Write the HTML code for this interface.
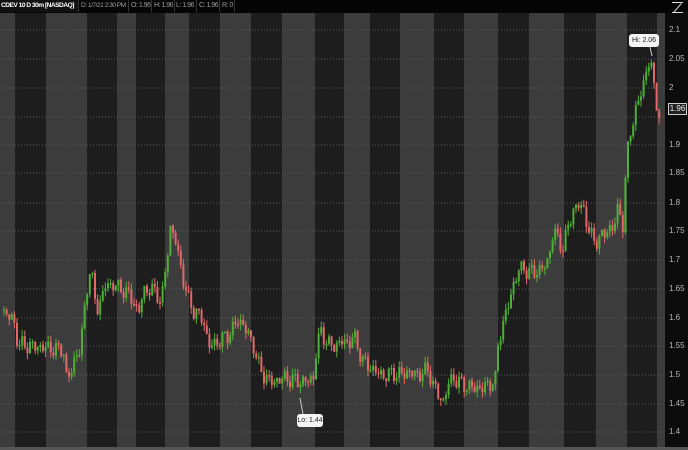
<!DOCTYPE html>
<html><head><meta charset="utf-8"><style>
*{margin:0;padding:0;box-sizing:border-box}
body{width:688px;height:450px;background:#0c0c0c;overflow:hidden;position:relative;font-family:"Liberation Sans",sans-serif}
#hdr{position:absolute;left:0;top:0;width:688px;height:13px;background:#050505;font-size:7px;color:#9a9a9a;line-height:12px}
#hdr span{position:absolute;top:0;padding:0 1px;border-right:1px solid #333;white-space:nowrap;overflow:hidden;letter-spacing:-0.5px;height:12px}
.ax{position:absolute;left:669px;font-size:8px;color:#b8b8b8}
.lbl{position:absolute;background:#f4f4f4;border-radius:3px;color:#222;font-size:7px;line-height:13px;text-align:center;white-space:nowrap;height:13px}
</style></head><body>
<svg id="c" width="688" height="450" style="position:absolute;left:0;top:0"></svg>
<div id="hdr">
<span style="left:0;width:79px;color:#fff;font-weight:bold;background:#111;font-size:6.6px">CDEV 10 D 30m [NASDAQ]</span>
<span style="left:80px;width:49px;font-size:6.6px">D: 1/7/21 2:30 PM</span>
<span style="left:130px;width:22px">O: 1.96</span>
<span style="left:153px;width:22px">H: 1.96</span>
<span style="left:175px;width:22px">L: 1.96</span>
<span style="left:198px;width:22px">C: 1.96</span>
<span style="left:221px;width:14px">R: 0</span>
</div>
<div style="position:absolute;left:672px;top:2px;width:11px;height:11px;border-bottom:1px solid #ddd;border-top:1px solid #ddd"><div style="position:absolute;left:5px;top:-1px;width:1px;height:12px;background:#ddd;transform:rotate(40deg)"></div></div>
<div class="ax" style="top:25px">2.1</div>
<div class="ax" style="top:54px">2.05</div>
<div class="ax" style="top:83px">2</div>
<div class="ax" style="top:140px">1.9</div>
<div class="ax" style="top:168px">1.85</div>
<div class="ax" style="top:198px">1.8</div>
<div class="ax" style="top:226px">1.75</div>
<div class="ax" style="top:255px">1.7</div>
<div class="ax" style="top:284px">1.65</div>
<div class="ax" style="top:313px">1.6</div>
<div class="ax" style="top:341px">1.55</div>
<div class="ax" style="top:370px">1.5</div>
<div class="ax" style="top:399px">1.45</div>
<div class="ax" style="top:427px">1.4</div>
<div style="position:absolute;left:668px;top:103px;width:19px;height:12px;border:1px solid #ccc;background:#222;color:#eee;font-size:8px;line-height:10px;text-align:center">1.96</div>
<div class="lbl" style="left:629px;top:34px;width:30px">Hi: 2.06</div>
<div class="lbl" style="left:297px;top:414px;width:26px">Lo: 1.44</div>
<script>
(function(){
var s=document.getElementById('c'),h='';
var st=[[0,2,'L'],[2,15,'L'],[15,46,'D'],[46,87,'L'],[87,117,'D'],[117,136,'L'],[136,165,'D'],[165,189,'L'],[189,220,'D'],[220,251,'L'],[251,282,'D'],[282,315,'L'],[315,344,'D'],[344,370,'L'],[370,400,'D'],[400,434,'L'],[434,464,'D'],[464,498,'L'],[498,529,'D'],[529,564,'L'],[564,596,'D'],[596,627,'L'],[627,657,'D'],[657,665,'L']];
st.forEach(function(a){h+='<rect x="'+a[0]+'" y="13" width="'+(a[1]-a[0])+'" height="434" fill="'+(a[2]=='L'?'#3c3c3c':'#1d1d1d')+'"/>';});
[30,59,88,117,145,173,203,231,260,289,318,346,375,404,432].forEach(function(y){h+='<line x1="0" x2="665" y1="'+y+'" y2="'+y+'" stroke="#5a5a5a" stroke-width="1" stroke-dasharray="1,2"/>';});
h+='<rect x="0" y="447" width="688" height="3" fill="#555"/>';
var w=[[3,310],[15,320],[20,345],[25,345],[40,347],[50,348],[60,350],[65,348],[68,378],[72,375],[77,355],[82,350],[88,290],[92,270],[97,300],[100,310],[107,285],[115,285],[125,290],[135,300],[140,315],[145,290],[155,290],[160,295],[163,305],[167,270],[172,228],[177,240],[181,260],[185,280],[190,300],[195,310],[200,315],[205,320],[210,345],[215,345],[222,340],[230,335],[240,320],[245,325],[250,335],[255,345],[260,365],[265,375],[270,380],[275,382],[285,378],[295,380],[305,382],[315,378],[318,350],[322,330],[330,345],[340,345],[345,340],[350,345],[355,335],[365,362],[375,370],[385,376],[395,373],[400,375],[410,372],[420,375],[430,370],[435,385],[440,395],[445,402],[450,383],[455,378],[465,385],[475,388],[485,388],[497,380],[500,340],[505,322],[510,305],[515,285],[520,270],[525,268],[530,272],[537,272],[545,268],[550,260],[555,230],[560,240],[565,248],[570,225],[575,210],[580,205],[585,208],[590,230],[595,240],[600,240],[605,235],[610,228],[615,230],[620,205],[625,228],[628,160],[632,130],[638,110],[643,90],[648,72],[652,58],[656,90],[660,115]];
function yat(x){for(var i=0;i<w.length-1;i++){if(x<=w[i+1][0]){var t=(x-w[i][0])/(w[i+1][0]-w[i][0]);return w[i][1]+t*(w[i+1][1]-w[i][1]);}}return w[w.length-1][1];}
var prev=yat(3);
for(var x=3;x<=660;x+=2.6){var c=yat(x+2.6)+Math.sin(x*1.7)*6+Math.sin(x*0.53)*3;var o=prev;var tp=Math.min(o,c),bt=Math.max(o,c);if(bt-tp<1.5)bt=tp+1.5;var col=c<o?'#4fae36':(c>o?'#e26868':'#9a9a9a');var wt=tp-Math.abs(Math.sin(x*2.3))*6,wb=bt+Math.abs(Math.cos(x*1.9))*6;
h+='<line x1="'+(x+1).toFixed(1)+'" x2="'+(x+1).toFixed(1)+'" y1="'+wt.toFixed(1)+'" y2="'+wb.toFixed(1)+'" stroke="'+col+'" stroke-width="1"/><rect x="'+x.toFixed(1)+'" y="'+tp.toFixed(1)+'" width="2" height="'+(bt-tp).toFixed(1)+'" fill="'+col+'"/>';prev=c;}
h+='<line x1="300" y1="398" x2="303" y2="414" stroke="#ccc"/><line x1="650" y1="47" x2="652" y2="56" stroke="#ccc"/>';
s.innerHTML=h;
})();
</script>
</body></html>
